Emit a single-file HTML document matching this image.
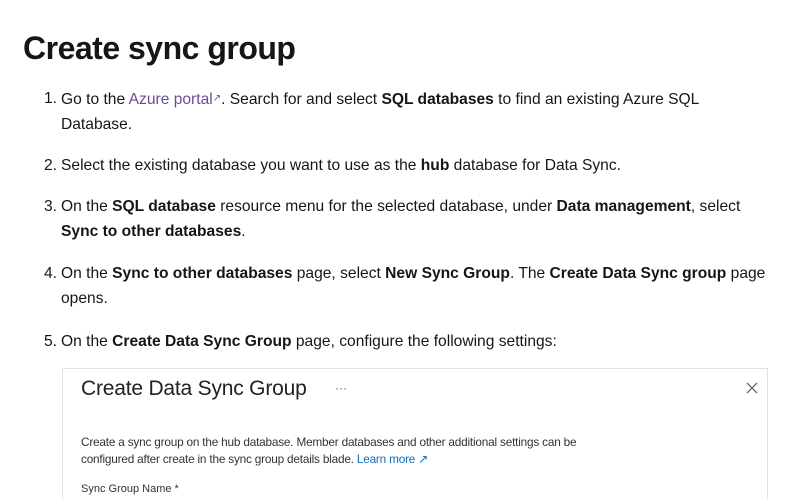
<!DOCTYPE html>
<html><head><meta charset="utf-8"><style>
body{margin:0;background:#fff;font-family:"Liberation Sans",sans-serif;color:#161616;width:809px;height:490px;overflow:hidden;position:relative}
h1{position:absolute;left:23px;top:26px;margin:0;font-size:32px;font-weight:700;letter-spacing:-0.5px;line-height:44px}
.li{position:absolute;left:61px;font-size:15.6px;line-height:25px;width:720px}
.li .n{position:absolute;left:-17px}
b{font-weight:700}
a{color:#6b4c9a;text-decoration:none}
.ext{font-size:10px;vertical-align:3px}
.box{position:absolute;left:62px;top:368px;width:704px;height:130px;border:1px solid #e1e1e1;border-bottom:none}
.box h2{position:absolute;left:18px;top:8px;margin:0;font-size:21px;font-weight:400;color:#222;letter-spacing:-0.2px}
.dots{position:absolute;left:272px;top:12px;font-size:12px;color:#666}
.x{position:absolute;right:9px;top:13px}
.desc{position:absolute;left:18px;top:65px;font-size:11.8px;line-height:17px;color:#333;letter-spacing:-0.2px}
.desc a{color:#0f6cbd}
.lbl{position:absolute;left:18px;top:114px;font-size:11px;color:#333}
</style></head><body>
<h1>Create sync group</h1>
<div class="li" style="top:86px"><span class="n">1.</span>Go to the <a>Azure portal<span class="ext">↗</span></a>. Search for and select <b>SQL databases</b> to find an existing Azure SQL<br>Database.</div>
<div class="li" style="top:153px"><span class="n">2.</span>Select the existing database you want to use as the <b>hub</b> database for Data Sync.</div>
<div class="li" style="top:194px"><span class="n">3.</span>On the <b>SQL database</b> resource menu for the selected database, under <b>Data management</b>, select<br><b>Sync to other databases</b>.</div>
<div class="li" style="top:261px"><span class="n">4.</span>On the <b>Sync to other databases</b> page, select <b>New Sync Group</b>. The <b>Create Data Sync group</b> page<br>opens.</div>
<div class="li" style="top:329px"><span class="n">5.</span>On the <b>Create Data Sync Group</b> page, configure the following settings:</div>
<div class="box">
<h2>Create Data Sync Group</h2><span class="dots">···</span>
<svg class="x" width="12" height="12" viewBox="0 0 12 12"><path d="M1 1L11 11M11 1L1 11" stroke="#555" stroke-width="1.2"/></svg>
<div class="desc">Create a sync group on the hub database. Member databases and other additional settings can be<br>configured after create in the sync group details blade. <a>Learn more ↗</a></div>
<div class="lbl">Sync Group Name *</div>
</div>
</body></html>
